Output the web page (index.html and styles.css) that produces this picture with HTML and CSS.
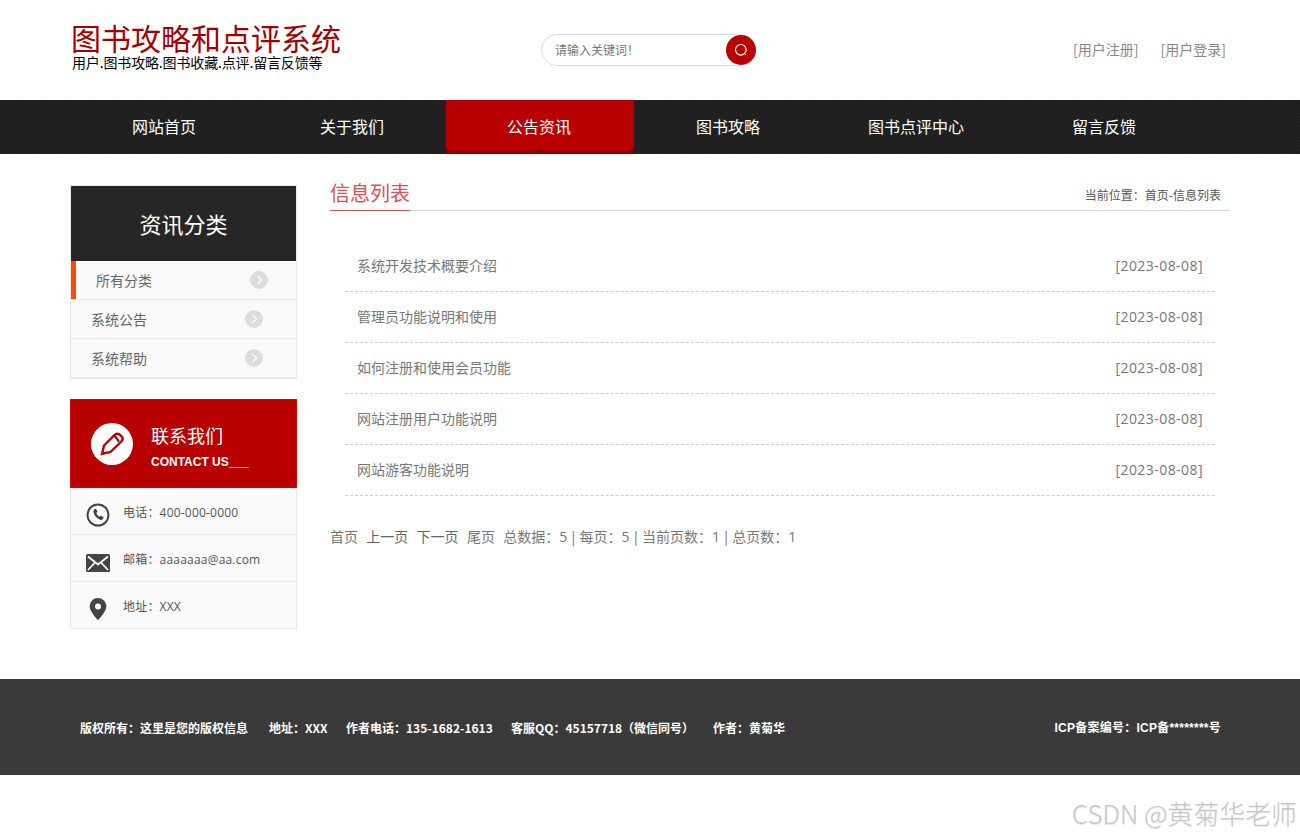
FILE: index.html
```html
<!DOCTYPE html>
<html lang="zh-CN">
<head>
<meta charset="utf-8">
<title>图书攻略和点评系统</title>
<link rel="stylesheet" href="styles.css">
</head>
<body>
<header class="header">
  <div class="wrap header-in">
    <div class="brand">
      <div class="brand-title">图书攻略和点评系统</div>
      <div class="brand-sub">用户.图书攻略.图书收藏.点评.留言反馈等</div>
    </div>
    <div class="search">
      <span class="search-text">请输入关键词！</span>
      <span class="search-btn">
        <svg width="16" height="16" viewBox="0 0 16 16"><circle cx="7.800" cy="7.800" r="5.300" fill="none" stroke="#fff" stroke-width="1.200"/><path d="M12 12l1 1" stroke="#fff" stroke-width="1"/></svg>
      </span>
    </div>
    <div class="user-links"><a>[用户注册]</a><a>[用户登录]</a></div>
  </div>
</header>
<nav class="nav">
  <div class="wrap nav-in">
    <a class="nav-item">网站首页</a>
    <a class="nav-item">关于我们</a>
    <a class="nav-item active">公告资讯<i class="notch"></i></a>
    <a class="nav-item">图书攻略</a>
    <a class="nav-item">图书点评中心</a>
    <a class="nav-item">留言反馈</a>
  </div>
</nav>
<main class="wrap main">
  <aside class="side">
    <section class="cats">
      <h2 class="cats-head">资讯分类</h2>
      <a class="cat current"><span>所有分类</span><i class="arrow"><svg width="16" height="16" viewBox="0 0 16 16"><path d="M6.500 4l4 4-4 4" fill="none" stroke="#fff" stroke-width="1.200"/></svg></i></a>
      <a class="cat"><span>系统公告</span><i class="arrow"><svg width="16" height="16" viewBox="0 0 16 16"><path d="M6.500 4l4 4-4 4" fill="none" stroke="#fff" stroke-width="1.200"/></svg></i></a>
      <a class="cat"><span>系统帮助</span><i class="arrow"><svg width="16" height="16" viewBox="0 0 16 16"><path d="M6.500 4l4 4-4 4" fill="none" stroke="#fff" stroke-width="1.200"/></svg></i></a>
    </section>
    <section class="contact">
      <div class="contact-head">
        <span class="contact-badge">
          <svg width="26" height="26" viewBox="0 0 26 26"><path d="M3 23 5 14.500 15.500 4C17 2.500 19 2.300 20.800 3.700L22.500 5.300C24 6.900 23.800 9 22.300 10.500L11.500 21z" fill="none" stroke="#b80000" stroke-width="2.400" stroke-linejoin="miter"/><path d="M15.500 5C17 6.800 19 8.500 19.800 10.800" fill="none" stroke="#b80000" stroke-width="2.200"/></svg>
        </span>
        <div>
          <div class="contact-title">联系我们</div>
          <div class="contact-en">CONTACT US___</div>
        </div>
      </div>
      <div class="contact-row">
        <svg class="ci" width="24" height="24" viewBox="0 0 24 24"><circle cx="12" cy="12" r="10.500" fill="none" stroke="#444" stroke-width="2"/><path d="M8.300 6.300l1.600-.6 1.600 3-1.200 1.200c.4 1.400 2 3.200 3.300 3.800l1.300-1.100 2.800 1.900-.7 1.600c-.6.8-1.700 1-2.800.6-3.400-1.200-6-4-6.700-7.500-.2-1 .1-2.100.8-2.900z" fill="#444"/></svg>
        <span>电话：400-000-0000</span>
      </div>
      <div class="contact-row">
        <svg class="ci env" width="24" height="18" viewBox="0 0 24 18"><rect width="24" height="18" rx="1.500" fill="#444"/><path d="M2 2.500l10 8 10-8M2 16l7-7.500M22 16l-7-7.500" fill="none" stroke="#fff" stroke-width="1.800"/></svg>
        <span>邮箱：aaaaaaa@aa.com</span>
      </div>
      <div class="contact-row">
        <svg class="ci" width="24" height="22" viewBox="0 0 24 22"><path fill-rule="evenodd" d="M12 0a8.400 8.400 0 0 1 8.400 8.400C20.400 13.500 12 22 12 22S3.600 13.500 3.600 8.400A8.400 8.400 0 0 1 12 0zm0 5.400a3 3 0 1 0 0 6 3 3 0 0 0 0-6z" fill="#444"/></svg>
        <span>地址：XXX</span>
      </div>
    </section>
  </aside>
  <section class="content">
    <div class="content-head">
      <h1 class="content-title">信息列表</h1>
      <div class="crumb">当前位置：首页-信息列表</div>
    </div>
    <ul class="list">
      <li><a>系统开发技术概要介绍</a><span>[2023-08-08]</span></li>
      <li><a>管理员功能说明和使用</a><span>[2023-08-08]</span></li>
      <li><a>如何注册和使用会员功能</a><span>[2023-08-08]</span></li>
      <li><a>网站注册用户功能说明</a><span>[2023-08-08]</span></li>
      <li><a>网站游客功能说明</a><span>[2023-08-08]</span></li>
    </ul>
    <div class="pager">
      <a>首页</a><a class="dark">上一页</a><a class="dark">下一页</a><a>尾页</a><span>总数据：5 | 每页：5 | 当前页数：1 | 总页数：1</span>
    </div>
  </section>
</main>
<footer class="footer">
  <div class="wrap footer-in">
    <div class="footer-left">
      <span class="f1">版权所有：这里是您的版权信息</span>
      <span class="f2">地址：XXX</span>
      <span class="f3">作者电话：135-1682-1613</span>
      <span class="f4">客服QQ：45157718（微信同号）</span>
      <span>作者：黄菊华</span>
    </div>
    <div class="footer-right">ICP备案编号：ICP备********号</div>
  </div>
</footer>
<div class="watermark">CSDN @黄菊华老师</div>
</body>
</html>
```
FILE: styles.css
```css
* { box-sizing: border-box; }
html, body { margin: 0; padding: 0; }
body {
  position: relative;
  height: 837px;
  overflow: hidden;
  background: #fff;
  font-family: "Noto Sans CJK SC", "Liberation Sans", sans-serif;
  color: #666;
}
h1, h2, ul { margin: 0; padding: 0; font-weight: normal; list-style: none; }
i { font-style: normal; }
.wrap { width: 1160px; margin: 0 auto; }

.header { height: 100px; }
.header-in { display: flex; align-items: flex-start; height: 100%; }
.brand { width: 471px; padding: 20px 0 0 1px; }
.brand-title { font-size: 30px; line-height: 34px; color: #a50000; }
.brand-sub { font-size: 14px; line-height: 14px; color: #000; margin: 1px 0 0 1px; letter-spacing: -0.15px; white-space: nowrap; }
.search {
  width: 215px; height: 32px; margin-top: 34px;
  border: 1px solid #ddd; border-radius: 16px;
  display: flex; align-items: center; justify-content: space-between;
  padding-left: 13px;
}
.search-text { font-size: 12px; line-height: 16px; color: #777; margin-top: -1px; }
.search-btn {
  width: 30px; height: 30px; border-radius: 50%; background: #b80000;
  display: flex; align-items: center; justify-content: center;
  margin-right: -1px;
}
.user-links { margin-left: auto; margin-right: 4px; margin-top: 39px; display: flex; gap: 22px; font-size: 14px; line-height: 20px; color: #888; }

.nav {
  height: 54px;
  background-color: #232323;
  background-image: linear-gradient(135deg, #1c1c1c 25%, #282828 25%, #282828 50%, #1c1c1c 50%, #1c1c1c 75%, #282828 75%);
  background-size: 3px 3px;
}
.nav-in { display: flex; height: 100%; }
.nav-item {
  width: 188px; height: 54px; line-height: 52px; text-align: center;
  color: #fff; font-size: 16px; position: relative;
}
.nav-item.active { background: #b80000; padding-right: 2px; }
.notch {
  position: absolute; left: 0; right: 0; bottom: 0; height: 7px;
  background: #8a0000;
  clip-path: polygon(0 0, 6px 4px, 90px 4px, 94px 0, 98px 4px, 182px 4px, 100% 0, 100% 100%, 0 100%);
}

.main { display: flex; align-items: flex-start; height: 525px; padding-top: 31px; }
.side { width: 227px; margin-right: 33px; }
.cats { border: 1px solid #e8e8e8; border-bottom-width: 2px; background: #fafafa; }
.cats-head { height: 75px; line-height: 75px; background: #262626; color: #fff; text-align: center; font-size: 22px; }
.cat {
  display: flex; align-items: center; justify-content: space-between;
  height: 39px; padding: 0 33px 0 20px; font-size: 14px; line-height: 20px; color: #666;
  border-bottom: 1px solid #e8e8e8;
}
.cat:last-child { border-bottom: 0; height: 38px; }
.cat.current { box-shadow: inset 5px 0 0 #ff4a00; padding-right: 28px; padding-left: 25px; }
.arrow {
  width: 18px; height: 18px; border-radius: 50%; background: #ddd;
  display: flex; align-items: center; justify-content: center; margin-top: -1px;
}

.contact { margin-top: 20px; border: 1px solid #e8e8e8; border-top: 0; background: #fafafa; }
.contact-head {
  margin: 0 -1px; height: 89px; background: #b80000; border: 1px solid #d80000;
  display: flex; align-items: center; padding-left: 20px; gap: 18px; color: #fff;
}
.contact-badge {
  width: 42px; height: 42px; border-radius: 50%; background: #fff;
  display: flex; align-items: center; justify-content: center;
}
.contact-title { font-size: 18px; line-height: 26px; margin-top: 5px; }
.contact-en { font-size: 12px; line-height: 16px; font-weight: bold; font-family: "Liberation Sans", sans-serif; margin-top: 6px; }
.contact-row {
  height: 47px; display: flex; align-items: center; font-size: 12px; color: #555;
  font-family: "Open Sans", "Noto Sans CJK SC", sans-serif; letter-spacing: 0.2px;
  border-bottom: 1px solid #e8e8e8; padding-left: 15px; gap: 13px;
}
.contact-row:last-child { border-bottom: 0; height: 46px; }
.contact-row span { margin-top: 2px; }
.ci { flex: none; margin-top: 7px; }
.env { margin-top: 9px; }

.content { width: 900px; }
.content-head {
  height: 26px; display: flex; justify-content: space-between; align-items: flex-end;
  border-bottom: 1px solid #d8d8d8;
}
.content-title {
  width: 80px; height: 26px; line-height: 16px; font-size: 20px; color: #e05050;
  border-bottom: 1px solid #e05050; margin-bottom: -1px; white-space: nowrap;
}
.crumb { font-size: 12px; line-height: 18px; color: #555; margin-right: 9px; padding-bottom: 6px; white-space: nowrap; }
.list { margin: 30px 15px 0; }
.list li {
  height: 51px; display: flex; justify-content: space-between; align-items: center;
  border-bottom: 1px dashed #ccc; padding: 0 12px 1px; color: #777;
}
.list a { font-size: 14px; line-height: 20px; margin-top: -1px; }
.list span { font-size: 14px; line-height: 20px; font-family: "Open Sans", "Noto Sans CJK SC", sans-serif; letter-spacing: 0.45px; margin-top: 1px; }
.pager { margin-top: 30px; font-size: 14px; line-height: 22px; color: #777; display: flex; gap: 8.3px; word-spacing: -1.3px; font-family: "Open Sans", "Noto Sans CJK SC", sans-serif; }
.pager .dark { color: #666; }

.footer { height: 96px; background: #3a3a3a; color: #fff; font-size: 12px; font-weight: bold; }
.footer-in { display: flex; justify-content: space-between; padding: 40px 9px 0 10px; line-height: 18px; }
.footer-left { display: flex; }
.f1 { width: 189px; }
.f2 { width: 77px; }
.f3 { width: 165px; }
.f4 { width: 202px; }
.footer-right { font-family: "Liberation Sans", "Noto Sans CJK SC", sans-serif; letter-spacing: 0.25px; }

.watermark {
  position: absolute; right: 3px; bottom: 6px;
  font-size: 25.9px; line-height: 36px; color: #c8c8c8; font-weight: 300;
  text-shadow: 0 1px 1px #e4e4e4;
  white-space: nowrap;
}
```
